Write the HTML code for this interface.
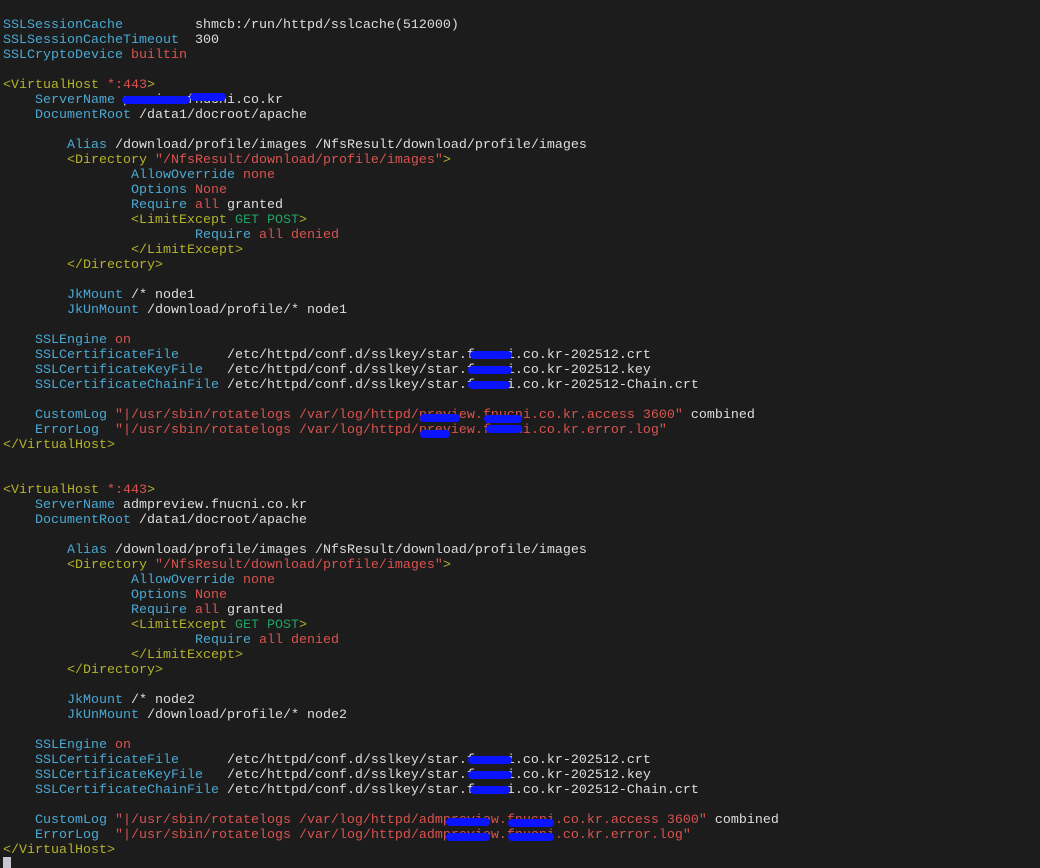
<!DOCTYPE html>
<html><head><meta charset="utf-8"><style>
html,body{margin:0;padding:0;background:#1c1c1c;width:1040px;height:868px;overflow:hidden}
pre{position:absolute;left:3px;top:18px;margin:0;font-family:"Liberation Mono","DejaVu Sans Mono",monospace;font-size:13.33px;line-height:15px;color:#dedede;white-space:pre}
.c{color:#4ba9d3}.r{color:#d9534f}.y{color:#b4b22c}.g{color:#1fa463}
.b{position:absolute;background:#0a14ff;height:8px;border-radius:4px}
.cur{position:absolute;left:3px;top:857px;width:8px;height:11px;background:#c8c8d0}
</style></head><body>
<pre><span class="c">SSLSessionCache</span>         shmcb:/run/httpd/sslcache(512000)
<span class="c">SSLSessionCacheTimeout</span>  300
<span class="c">SSLCryptoDevice</span> <span class="r">builtin</span>

<span class="y">&lt;VirtualHost</span> <span class="r">*:443</span><span class="y">&gt;</span>
    <span class="c">ServerName</span> preview.fnucni.co.kr
    <span class="c">DocumentRoot</span> /data1/docroot/apache

        <span class="c">Alias</span> /download/profile/images /NfsResult/download/profile/images
        <span class="y">&lt;Directory</span> <span class="r">"/NfsResult/download/profile/images"</span><span class="y">&gt;</span>
                <span class="c">AllowOverride</span> <span class="r">none</span>
                <span class="c">Options</span> <span class="r">None</span>
                <span class="c">Require</span> <span class="r">all</span> granted
                <span class="y">&lt;LimitExcept</span> <span class="g">GET POST</span><span class="y">&gt;</span>
                        <span class="c">Require</span> <span class="r">all denied</span>
                <span class="y">&lt;/LimitExcept&gt;</span>
        <span class="y">&lt;/Directory&gt;</span>

        <span class="c">JkMount</span> /* node1
        <span class="c">JkUnMount</span> /download/profile/* node1

    <span class="c">SSLEngine</span> <span class="r">on</span>
    <span class="c">SSLCertificateFile</span>      /etc/httpd/conf.d/sslkey/star.fnucni.co.kr-202512.crt
    <span class="c">SSLCertificateKeyFile</span>   /etc/httpd/conf.d/sslkey/star.fnucni.co.kr-202512.key
    <span class="c">SSLCertificateChainFile</span> /etc/httpd/conf.d/sslkey/star.fnucni.co.kr-202512-Chain.crt

    <span class="c">CustomLog</span> <span class="r">"|/usr/sbin/rotatelogs /var/log/httpd/preview.fnucni.co.kr.access 3600"</span> combined
    <span class="c">ErrorLog</span>  <span class="r">"|/usr/sbin/rotatelogs /var/log/httpd/preview.fnucni.co.kr.error.log"</span>
<span class="y">&lt;/VirtualHost&gt;</span>


<span class="y">&lt;VirtualHost</span> <span class="r">*:443</span><span class="y">&gt;</span>
    <span class="c">ServerName</span> admpreview.fnucni.co.kr
    <span class="c">DocumentRoot</span> /data1/docroot/apache

        <span class="c">Alias</span> /download/profile/images /NfsResult/download/profile/images
        <span class="y">&lt;Directory</span> <span class="r">"/NfsResult/download/profile/images"</span><span class="y">&gt;</span>
                <span class="c">AllowOverride</span> <span class="r">none</span>
                <span class="c">Options</span> <span class="r">None</span>
                <span class="c">Require</span> <span class="r">all</span> granted
                <span class="y">&lt;LimitExcept</span> <span class="g">GET POST</span><span class="y">&gt;</span>
                        <span class="c">Require</span> <span class="r">all denied</span>
                <span class="y">&lt;/LimitExcept&gt;</span>
        <span class="y">&lt;/Directory&gt;</span>

        <span class="c">JkMount</span> /* node2
        <span class="c">JkUnMount</span> /download/profile/* node2

    <span class="c">SSLEngine</span> <span class="r">on</span>
    <span class="c">SSLCertificateFile</span>      /etc/httpd/conf.d/sslkey/star.fnucni.co.kr-202512.crt
    <span class="c">SSLCertificateKeyFile</span>   /etc/httpd/conf.d/sslkey/star.fnucni.co.kr-202512.key
    <span class="c">SSLCertificateChainFile</span> /etc/httpd/conf.d/sslkey/star.fnucni.co.kr-202512-Chain.crt

    <span class="c">CustomLog</span> <span class="r">"|/usr/sbin/rotatelogs /var/log/httpd/admpreview.fnucni.co.kr.access 3600"</span> combined
    <span class="c">ErrorLog</span>  <span class="r">"|/usr/sbin/rotatelogs /var/log/httpd/admpreview.fnucni.co.kr.error.log"</span>
<span class="y">&lt;/VirtualHost&gt;</span></pre>
<div class="b" style="left:122px;top:96px;width:68px"></div>
<div class="b" style="left:190px;top:93px;width:36px"></div>
<div class="b" style="left:470px;top:351px;width:42px"></div>
<div class="b" style="left:468px;top:366px;width:44px"></div>
<div class="b" style="left:468px;top:381px;width:42px"></div>
<div class="b" style="left:420px;top:414px;width:40px"></div>
<div class="b" style="left:484px;top:415px;width:38px"></div>
<div class="b" style="left:420px;top:430px;width:30px"></div>
<div class="b" style="left:486px;top:425px;width:36px"></div>
<div class="b" style="left:468px;top:756px;width:44px"></div>
<div class="b" style="left:468px;top:771px;width:44px"></div>
<div class="b" style="left:470px;top:786px;width:40px"></div>
<div class="b" style="left:446px;top:818px;width:44px"></div>
<div class="b" style="left:508px;top:819px;width:46px"></div>
<div class="b" style="left:446px;top:833px;width:44px"></div>
<div class="b" style="left:508px;top:833px;width:46px"></div>
<div class="cur"></div>
</body></html>
